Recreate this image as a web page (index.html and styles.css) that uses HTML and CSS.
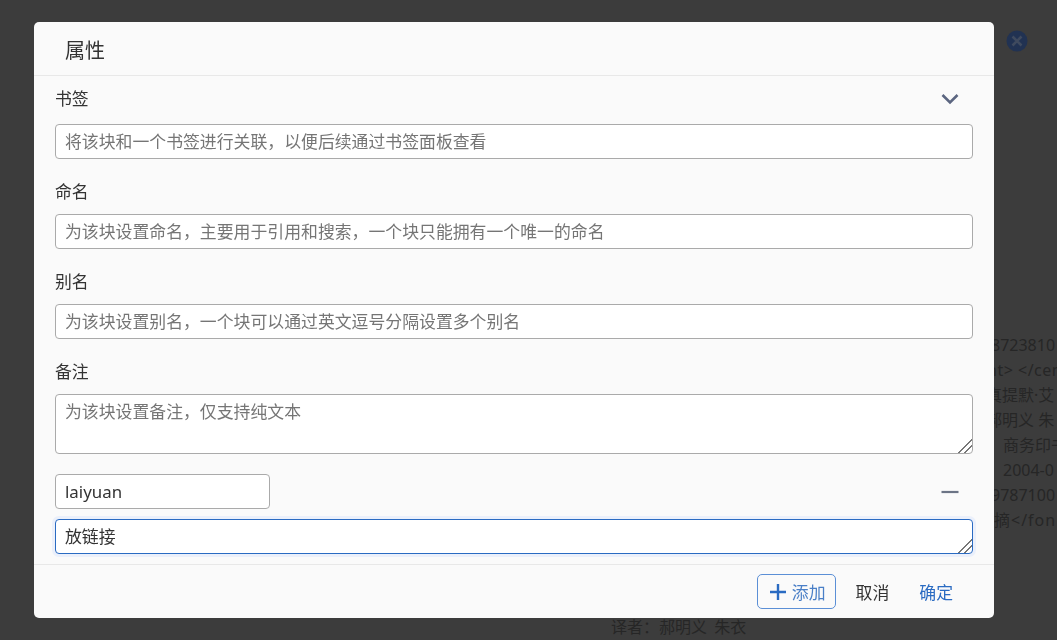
FILE: index.html
```html
<!DOCTYPE html>
<html lang="zh-CN">
<head>
    <meta charset="UTF-8">
    <meta name="viewport" content="width=device-width, initial-scale=1.0">
    <title>属性</title>
    <link rel="stylesheet" href="styles.css">
</head>
<body>

    <!-- Page behind the dialog -->
    <div class="page">
        <div class="page-lines">
            <div class="indent-5">8723810</div>
            <div class="indent-1 wide">nt&gt; &lt;/cen</div>
            <div>真提默·艾</div>
            <div>郝明义 朱</div>
            <div class="indent-17">商务印书</div>
            <div class="indent-17">2004-0</div>
            <div class="indent-5">9787100</div>
            <div class="indent-8 wider">摘&lt;/fon</div>
        </div>
        <div class="page-translator">译者：郝明义 朱衣</div>
    </div>

    <div class="overlay">
        <div class="dialog">
            <div class="dialog-title">属性</div>

            <div class="dialog-body">
                <div class="field-head first">
                    <label>书签</label>
                    <svg class="icon-btn" width="18" height="18" viewBox="0 0 18 18"><path d="M1.500 5l7.500 7.500L16.500 5" fill="none" stroke="#5b6580" stroke-width="2.600"/></svg>
                </div>
                <input class="text-input" type="text" placeholder="将该块和一个书签进行关联，以便后续通过书签面板查看">

                <div class="field-head">
                    <label>命名</label>
                </div>
                <input class="text-input" type="text" placeholder="为该块设置命名，主要用于引用和搜索，一个块只能拥有一个唯一的命名">

                <div class="field-head">
                    <label>别名</label>
                </div>
                <input class="text-input" type="text" placeholder="为该块设置别名，一个块可以通过英文逗号分隔设置多个别名">

                <div class="field-head">
                    <label>备注</label>
                </div>
                <textarea class="text-input memo" placeholder="为该块设置备注，仅支持纯文本"></textarea>

                <div class="custom-head">
                    <input class="text-input custom-name" type="text" value="laiyuan">
                    <svg class="icon-btn" width="18" height="18" viewBox="0 0 18 18"><path d="M0.500 9h17" fill="none" stroke="#6b7485" stroke-width="2.200"/></svg>
                </div>
                <textarea class="text-input custom-value focused">放链接</textarea>
            </div>

            <div class="dialog-footer">
                <button class="btn btn-add">
                    <svg width="18" height="18" viewBox="0 0 18 18"><path d="M9 1v16M1 9h16" fill="none" stroke="#2a6bc2" stroke-width="2.400"/></svg>
                    添加
                </button>
                <button class="btn">取消</button>
                <button class="btn btn-primary">确定</button>
            </div>
        </div>

        <svg class="close" width="22" height="22" viewBox="0 0 22 22">
            <circle cx="11" cy="11" r="10.500" fill="#213252"/>
            <path d="M6.500 6.500l9 9M15.500 6.500l-9 9" fill="none" stroke="#3f4a5e" stroke-width="2.600"/>
        </svg>
    </div>

</body>
</html>
```

FILE: styles.css
```css
* {
    box-sizing: border-box;
}

body {
    margin: 0;
    height: 640px;
    overflow: hidden;
    background: #3c3c3c;
    color: #333;
    font-family: "Noto Sans", "Noto Sans CJK SC", sans-serif;
    font-size: 16.875px;
}

/* Pagina de fondo */
.page {
    height: 640px;
    color: #262626;
    font-size: 16px;
    white-space: nowrap;
    overflow: hidden;
}

.page-lines {
    margin-left: 986px;
    padding-top: 333px;
    line-height: 25px;
}

.indent-1 { padding-left: 1px; }
.indent-5 { padding-left: 5px; }
.indent-8 { padding-left: 8px; }
.indent-17 { padding-left: 17px; }

.wide {
    letter-spacing: 0.5px;
}

.wider {
    letter-spacing: 1px;
}

.page-translator {
    margin: 82px 0 0 611px;
    line-height: 25px;
    word-spacing: 3px;
}

/* Dialogo */
.overlay {
    position: fixed;
    top: 0;
    left: 0;
    right: 0;
    bottom: 0;
    padding: 22px 0 0 34px;
}

.dialog {
    width: 960px;
    height: 596px;
    background: #fafafa;
    border-radius: 5px;
}

.dialog-title {
    height: 54px;
    padding-left: 31px;
    font-size: 20px;
    line-height: 58px;
    border-bottom: 1px solid #e8e8e8;
}

.dialog-body {
    height: 488px;
    padding: 12px 21px 0;
}

.field-head {
    display: flex;
    align-items: center;
    justify-content: space-between;
    height: 22px;
    margin: 22px 0 11px;
    line-height: 22px;
}

.field-head.first {
    margin: 0 0 14px;
}

.icon-btn {
    margin-right: 14px;
}

.text-input {
    display: block;
    width: 100%;
    height: 35px;
    padding: 6px 9px;
    border: 1px solid #aaa;
    border-radius: 4px;
    background: #fff;
    color: #333;
    font: inherit;
    line-height: 21px;
    outline: none;
}

.text-input::placeholder {
    color: #757575;
}

textarea.text-input::-webkit-resizer {
    background: linear-gradient(135deg, transparent 52%, #777 52%, #777 59%, transparent 59%, transparent 72%, #777 72%, #777 79%, transparent 79%);
}

.memo {
    height: 60px;
}

.custom-head {
    display: flex;
    align-items: center;
    justify-content: space-between;
    margin: 20px 0 10px;
}

.custom-name {
    width: 215px;
}

.custom-value {
    height: 35px;
}

.focused {
    border-color: #2a6bc2;
    box-shadow: 0 0 0 3px #ebf0fb;
}

.dialog-footer {
    display: flex;
    align-items: center;
    justify-content: flex-end;
    height: 54px;
    padding-right: 26px;
    border-top: 1px solid #e8e8e8;
}

.btn {
    display: flex;
    align-items: center;
    height: 35px;
    padding: 0 14px;
    border: 1px solid transparent;
    border-radius: 5px;
    background: none;
    color: #333;
    font: inherit;
}

.btn-add {
    gap: 5px;
    margin-right: 5px;
    padding: 0 9px 0 11px;
    border-color: #5b8fd6;
    color: #4a7fc7;
}

.btn-primary {
    color: #2a6bc2;
}

.close {
    position: absolute;
    top: 30px;
    left: 1006px;
}
```
